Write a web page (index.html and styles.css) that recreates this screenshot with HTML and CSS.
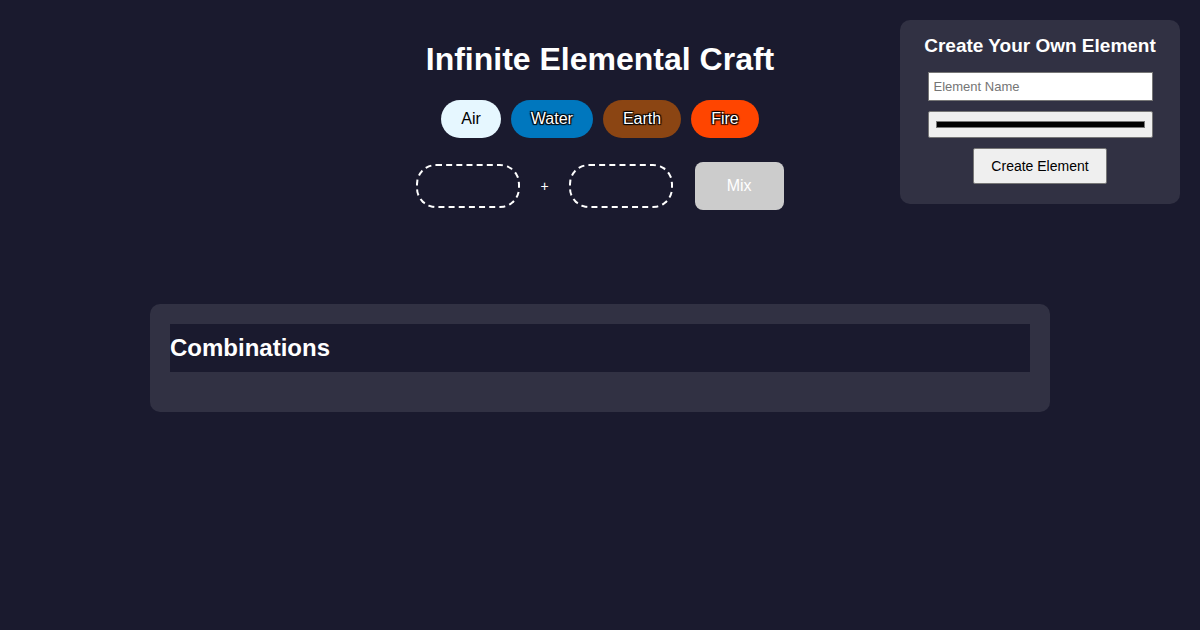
FILE: index.html
```html
<!DOCTYPE html>
<html lang="en">
<head>
<meta charset="utf-8">
<title>Infinite Elemental Craft</title>
<link rel="stylesheet" href="styles.css">
</head>
<body>
<div class="game">
  <h1 class="title">Infinite Elemental Craft</h1>
  <div class="elements">
    <button class="element air">Air</button>
    <button class="element water">Water</button>
    <button class="element earth">Earth</button>
    <button class="element fire">Fire</button>
  </div>
  <div class="mixing">
    <div class="slot"></div>
    <span class="plus">+</span>
    <div class="slot"></div>
    <button class="mix">Mix</button>
  </div>
  <section class="combos">
    <h2 class="combos-title">Combinations</h2>
    <div class="combos-list"></div>
  </section>
</div>
<aside class="creator">
  <h3 class="creator-title">Create Your Own Element</h3>
  <input class="field" type="text" placeholder="Element Name">
  <input class="field color" type="color" value="#000000">
  <button class="create">Create Element</button>
</aside>
</body>
</html>
```
FILE: styles.css
```css
body {
  margin: 0;
  background: #1a1a2e;
  color: #fff;
  font-family: "Liberation Sans", Arial, sans-serif;
}
.game {
  padding: 20px;
  text-align: center;
}
.title {
  font-size: 32px;
  margin: 21px 0 22px;
  line-height: 37px;
}
.elements {
  display: flex;
  justify-content: center;
  gap: 10px;
}
.element {
  font-family: "Liberation Sans", Arial, sans-serif;
  font-size: 16px;
  height: 38px;
  padding: 0 20px;
  border: none;
  border-radius: 20px;
  color: #fff;
  text-shadow: 1px 1px 1px #000, -1px -1px 1px #000, 1px -1px 1px #000, -1px 1px 1px #000;
}
.air { background: #e6f7ff; color: #000; text-shadow: none; }
.water { background: #0077be; }
.earth { background: #8b4513; }
.fire { background: #ff4500; }
.mixing {
  display: flex;
  justify-content: center;
  align-items: center;
  margin-top: 24px;
}
.slot {
  width: 100px;
  height: 40px;
  border: 2px dashed #fff;
  border-radius: 20px;
}
.plus {
  margin: 0 20px;
  font-size: 14px;
}
.mix {
  margin-left: 22px;
  background: #ccc;
  color: #fff;
  border: none;
  border-radius: 8px;
  padding: 15px 32px;
  font-family: "Liberation Sans", Arial, sans-serif;
  font-size: 16px;
  line-height: 18px;
}
.combos {
  max-width: 860px;
  margin: 94px auto 0;
  padding: 20px;
  background: #313143;
  border-radius: 10px;
  text-align: left;
}
.combos-title {
  margin: 0;
  background: #1a1a2e;
  font-size: 24px;
  line-height: 28px;
  padding: 10px 0;
}
.combos-list {
  height: 20px;
}
.creator {
  position: absolute;
  top: 20px;
  right: 20px;
  width: 250px;
  padding: 15px;
  background: #313143;
  border-radius: 10px;
  display: flex;
  flex-direction: column;
  align-items: center;
}
.creator-title {
  margin: 0 0 10px;
  font-size: 19px;
  line-height: 22px;
}
.field {
  box-sizing: border-box;
  width: 90%;
  margin: 5px 0;
  padding: 5px;
  font-family: "Liberation Sans", Arial, sans-serif;
  font-size: 13px;
  height: 29px;
  border: 1px solid #767676;
  background: #fff;
}
.color {
  height: 27px;
  background: #efefef;
  border-radius: 2px;
}
.create {
  margin: 5px 0;
  font-family: "Liberation Sans", Arial, sans-serif;
  font-size: 14px;
  padding: 8px 17px;
  height: 36px;
  background: #efefef;
  border: 1px solid #767676;
  border-radius: 2px;
  color: #000;
}
```
